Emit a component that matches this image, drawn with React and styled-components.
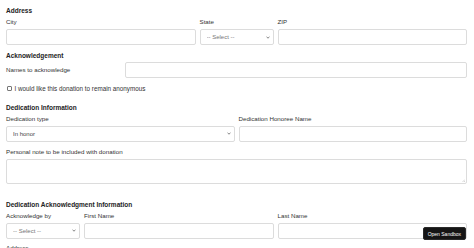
import React from "react"
import styled, { createGlobalStyle } from "styled-components"

const GlobalStyle = createGlobalStyle`
  html, body {
    margin: 0;
    padding: 0;
    background: #fff;
    overflow: hidden;
  }
  body {
    font-family: "Liberation Sans", Arial, sans-serif;
    color: #333;
  }
`

const Form = styled.form`
  padding: 7px 7px 0 6px;
  height: 248px;
  box-sizing: border-box;
  overflow: hidden;
`

const Section = styled.section`
  margin-bottom: ${(p) => p.$gap || 0}px;
`

const SectionTitle = styled.h3`
  margin: 0 0 ${(p) => (p.$tight ? 1.5 : 3)}px;
  font-size: 6.5px;
  line-height: 8px;
  font-weight: bold;
  color: #222;
`

const Row = styled.div`
  display: grid;
  grid-template-columns: ${(p) => p.$cols};
  column-gap: 4px;
`

const Field = styled.div`
  display: flex;
  flex-direction: column;
  min-width: 0;
  margin-top: ${(p) => p.$top || 0}px;
`

const Label = styled.label`
  display: block;
  font-size: 6.2px;
  line-height: 8px;
  color: #333;
  margin-bottom: 3px;
  white-space: nowrap;
`

const InlineRow = styled.div`
  display: flex;
  align-items: center;
`

const InlineLabel = styled(Label)`
  width: 119px;
  flex: none;
  margin: 0;
`

const Input = styled.input`
  display: block;
  box-sizing: border-box;
  width: 100%;
  height: 16px;
  margin: 0;
  padding: 0 4px;
  border: 1px solid #dcdcdc;
  border-radius: 2px;
  background: #fff;
  font: inherit;
  font-size: 6px;
  outline: none;
`

const TextArea = styled.textarea`
  display: block;
  box-sizing: border-box;
  width: 100%;
  height: 25px;
  margin: 0;
  padding: 3px 4px;
  border: 1px solid #dcdcdc;
  border-radius: 2px;
  font: inherit;
  font-size: 6px;
  resize: none;
  outline: none;
`

const Grip = styled.svg`
  position: absolute;
  right: 2px;
  bottom: 2px;
  width: 3px;
  height: 3px;
  pointer-events: none;
`

const Wrap = styled.div`
  position: relative;
  width: 100%;
`

const Select = styled.select`
  display: block;
  box-sizing: border-box;
  width: 100%;
  height: 16px;
  margin: 0;
  padding: 0 10px 0 6px;
  border: 1px solid #dcdcdc;
  border-radius: 2px;
  background: #fff;
  appearance: none;
  font-family: "Liberation Sans", Arial, sans-serif;
  font-size: 6px;
  color: ${(p) => (p.$muted ? "#777" : "#444")};
  outline: none;
`

const Chevron = styled.svg`
  position: absolute;
  right: 4px;
  top: 6.5px;
  width: 4px;
  height: 3px;
  pointer-events: none;
`

const CheckRow = styled.label`
  display: flex;
  align-items: center;
  gap: 2.5px;
  font-size: 6.3px;
  line-height: 8px;
  color: #333;
  white-space: nowrap;
`

const Box = styled.span`
  display: inline-block;
  box-sizing: border-box;
  width: 5px;
  height: 5px;
  border: 0.8px solid #777;
  border-radius: 1px;
  margin-left: 1px;
`

const SandboxButton = styled.button`
  position: fixed;
  right: 8px;
  bottom: 8px;
  height: 13px;
  padding: 0 4px;
  border: 1px solid #2a2a2a;
  border-radius: 2px;
  background: #151515;
  color: #fff;
  font-family: "Liberation Sans", Arial, sans-serif;
  font-size: 5px;
  cursor: pointer;
`

function Dropdown({ value, muted }) {
  return (
    <Wrap>
      <Select $muted={muted} defaultValue={value}>
        <option>{value}</option>
      </Select>
      <Chevron viewBox="0 0 7 5">
        <path d="M1 1 L3.5 3.8 L6 1" fill="none" stroke="#555" strokeWidth="1.2" />
      </Chevron>
    </Wrap>
  )
}

function Note() {
  return (
    <Wrap>
      <TextArea />
      <Grip viewBox="0 0 6 6">
        <path d="M6 1 L1 6 M6 4 L4 6" stroke="#999" strokeWidth="0.8" />
      </Grip>
    </Wrap>
  )
}

export default function App() {
  return (
    <>
      <GlobalStyle />
      <Form onSubmit={(e) => e.preventDefault()}>
        <Section $gap={7}>
          <SectionTitle>Address</SectionTitle>
          <Row $cols="1fr 74px 1fr">
            <Field>
              <Label>City</Label>
              <Input />
            </Field>
            <Field>
              <Label>State</Label>
              <Dropdown value="-- Select --" muted />
            </Field>
            <Field>
              <Label>ZIP</Label>
              <Input />
            </Field>
          </Row>
        </Section>

        <Section $gap={7}>
          <SectionTitle $tight>Acknowledgement</SectionTitle>
          <InlineRow>
            <InlineLabel>Names to acknowledge</InlineLabel>
            <Input />
          </InlineRow>
        </Section>

        <Section $gap={11}>
          <CheckRow>
            <Box />I would like this donation to remain anonymous
          </CheckRow>
        </Section>

        <Section $gap={17}>
          <SectionTitle>Dedication Information</SectionTitle>
          <Row $cols="1fr 1fr">
            <Field>
              <Label>Dedication type</Label>
              <Dropdown value="In honor" />
            </Field>
            <Field>
              <Label>Dedication Honoree Name</Label>
              <Input />
            </Field>
          </Row>
          <Field $top={6}>
            <Label>Personal note to be included with donation</Label>
            <Note />
          </Field>
        </Section>

        <Section>
          <SectionTitle>Dedication Acknowledgment Information</SectionTitle>
          <Row $cols="74px 1fr 1fr">
            <Field>
              <Label>Acknowledge by</Label>
              <Dropdown value="-- Select --" muted />
            </Field>
            <Field>
              <Label>First Name</Label>
              <Input />
            </Field>
            <Field>
              <Label>Last Name</Label>
              <Input />
            </Field>
          </Row>
          <Field $top={5}>
            <Label>Address</Label>
            <Input />
          </Field>
        </Section>
      </Form>
      <SandboxButton type="button">Open Sandbox</SandboxButton>
    </>
  )
}
